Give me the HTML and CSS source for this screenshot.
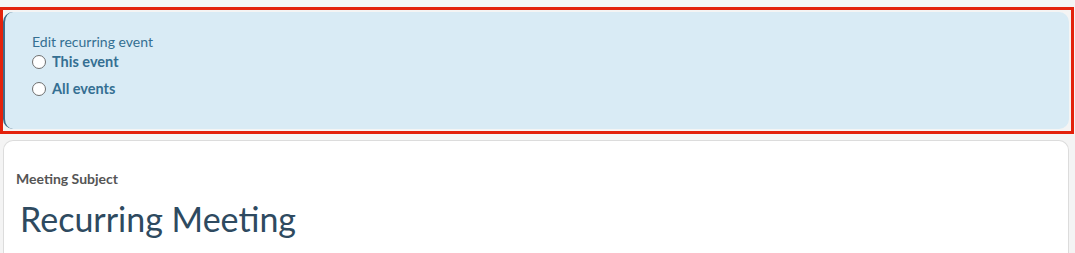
FILE: index.html
```html
<!DOCTYPE html>
<html>
<head>
<meta charset="utf-8">
<link rel="stylesheet" href="styles.css">
</head>
<body>
<div class="page">
  <div class="highlight">
    <div class="alert">
      <div class="alert-title">Edit recurring event</div>
      <label class="radio-row"><span class="radio"></span><span class="radio-label">This event</span></label>
      <label class="radio-row"><span class="radio"></span><span class="radio-label">All events</span></label>
    </div>
  </div>
  <div class="card">
    <div class="field-label">Meeting Subject</div>
    <div class="subject">Recurring Meeting</div>
  </div>
</div>
</body>
</html>
```

FILE: styles.css
```css
html, body {
  margin: 0;
  padding: 0;
  background: #f4f4f4;
  font-family: Lato, "Liberation Sans", sans-serif;
  overflow: hidden;
  height: 253px;
}
.page {
  padding-top: 7px;
  display: flex;
  flex-direction: column;
  gap: 6px;
}
.highlight {
  width: 1074px;
  box-sizing: border-box;
  border: 3px solid #e3210b;
  padding: 2px 2px 2px 0;
}
.alert {
  height: 117px;
  box-sizing: border-box;
  background: #d9ebf5;
  border-left: 2px solid #3d6b8a;
  border-radius: 10px;
  padding: 21px 27px;
  color: #346f92;
}
.alert-title {
  font-size: 14px;
  line-height: 18px;
  margin-bottom: 1px;
}
.radio-row {
  display: flex;
  align-items: center;
  gap: 6px;
  height: 27px;
  margin-top: -4px;
  margin-bottom: 4px;
}
.radio {
  width: 12px;
  height: 12px;
  border: 1.5px solid #6f6f6f;
  border-radius: 50%;
  background: #fff;
}
.radio-label {
  font-weight: bold;
  font-size: 14.5px;
}
.card {
  margin: 0 6px 0 3px;
  background: #fff;
  border: 1px solid #dcdcdc;
  border-bottom: none;
  border-radius: 10px 10px 0 0;
  padding: 29px 12px 0;
  height: 83px;
}
.field-label {
  font-weight: bold;
  font-size: 14px;
  color: #555;
}
.subject {
  margin-top: 12px;
  margin-left: 4px;
  font-size: 34px;
  line-height: 40px;
  color: #2e4a60;
}
```
